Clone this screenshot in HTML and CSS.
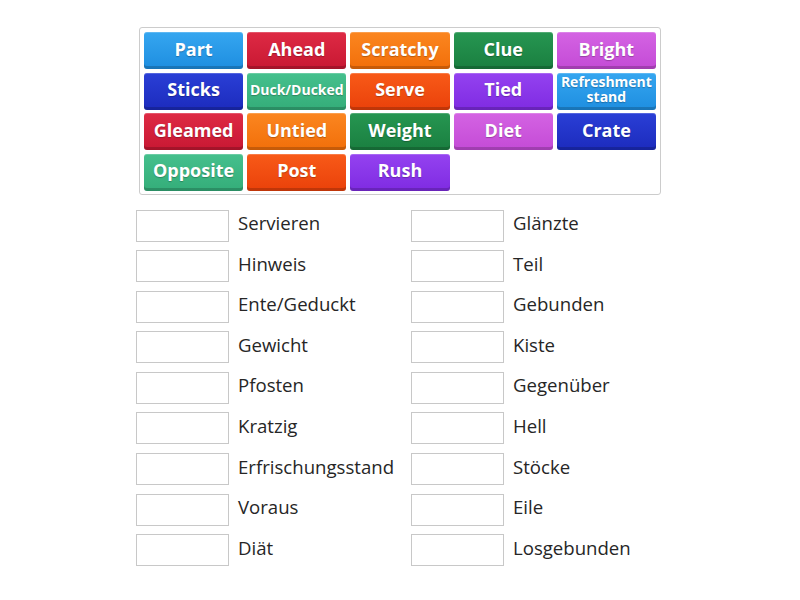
FILE: index.html
```html
<!DOCTYPE html>
<html lang="en">
<head>
    <meta charset="UTF-8">
    <meta name="viewport" content="width=device-width, initial-scale=1.0">
    <title>Match up</title>
    <link rel="stylesheet" href="styles.css">
</head>
<body>
    <div class="page">
        <div class="bank">
            <div class="tile blue">Part</div>
            <div class="tile red">Ahead</div>
            <div class="tile orange">Scratchy</div>
            <div class="tile green">Clue</div>
            <div class="tile pink">Bright</div>

            <div class="tile navy">Sticks</div>
            <div class="tile teal small">Duck/Ducked</div>
            <div class="tile flame">Serve</div>
            <div class="tile purple">Tied</div>
            <div class="tile blue small">Refreshment stand</div>

            <div class="tile red">Gleamed</div>
            <div class="tile orange">Untied</div>
            <div class="tile green">Weight</div>
            <div class="tile pink">Diet</div>
            <div class="tile navy">Crate</div>

            <div class="tile teal">Opposite</div>
            <div class="tile flame">Post</div>
            <div class="tile purple">Rush</div>
        </div>

        <div class="answers">
            <div class="col">
                <div class="row"><div class="slot"></div><span class="label">Servieren</span></div>
                <div class="row"><div class="slot"></div><span class="label">Hinweis</span></div>
                <div class="row"><div class="slot"></div><span class="label">Ente/Geduckt</span></div>
                <div class="row"><div class="slot"></div><span class="label">Gewicht</span></div>
                <div class="row"><div class="slot"></div><span class="label">Pfosten</span></div>
                <div class="row"><div class="slot"></div><span class="label">Kratzig</span></div>
                <div class="row"><div class="slot"></div><span class="label">Erfrischungsstand</span></div>
                <div class="row"><div class="slot"></div><span class="label">Voraus</span></div>
                <div class="row"><div class="slot"></div><span class="label">Diät</span></div>
            </div>
            <div class="col">
                <div class="row"><div class="slot"></div><span class="label">Glänzte</span></div>
                <div class="row"><div class="slot"></div><span class="label">Teil</span></div>
                <div class="row"><div class="slot"></div><span class="label">Gebunden</span></div>
                <div class="row"><div class="slot"></div><span class="label">Kiste</span></div>
                <div class="row"><div class="slot"></div><span class="label">Gegenüber</span></div>
                <div class="row"><div class="slot"></div><span class="label">Hell</span></div>
                <div class="row"><div class="slot"></div><span class="label">Stöcke</span></div>
                <div class="row"><div class="slot"></div><span class="label">Eile</span></div>
                <div class="row"><div class="slot"></div><span class="label">Losgebunden</span></div>
            </div>
        </div>
    </div>
</body>
</html>
```

FILE: styles.css
```css
body { margin: 0; background: #fff; font-family: "Open Sans", Arial, sans-serif; }
.page { padding: 27px 0 0 136px; }

.bank { margin-left: 3px; width: 512px; padding: 4px 4px 3px 4px; border: 1px solid #ccc; border-radius: 3px; display: grid; grid-template-columns: repeat(5, 1fr); grid-auto-rows: 37px; column-gap: 4px; row-gap: 3.5px; }
.tile { display: flex; align-items: center; justify-content: center; text-align: center; color: #fff; font-weight: 700; font-size: 18px; line-height: 1; border-radius: 3px; text-shadow: 0 1px 1px rgba(0,0,0,0.25); box-shadow: inset 0 -3px 0 rgba(0,0,0,0.18), inset 0 1px 0 rgba(255,255,255,0.2); padding-bottom: 4px; }
.tile.small { font-size: 14px; line-height: 15px; padding: 0 2px 4px; }

.blue   { background: linear-gradient(#35a6f0, #1e8ee0); }
.red    { background: linear-gradient(#de2a44, #c81833); }
.orange { background: linear-gradient(#fb8620, #f26f0a); }
.green  { background: linear-gradient(#269651, #1a7f40); }
.pink   { background: linear-gradient(#d463e3, #c44bd6); }
.navy   { background: linear-gradient(#2a3fd6, #1c2bbd); }
.teal   { background: linear-gradient(#45c08d, #34ad79); }
.flame  { background: linear-gradient(#f85a18, #ea410a); }
.purple { background: linear-gradient(#9442f0, #7f2be2); }

.answers { display: flex; margin-top: 15px; }
.col { width: 275px; display: flex; flex-direction: column; gap: 8.6px; }
.row { display: flex; align-items: center; gap: 9px; }
.slot { width: 91px; height: 30px; border: 1px solid #c8c8c8; background: #fff; }
.label { font-size: 18.6px; color: #262626; margin-top: -6px; }
```
